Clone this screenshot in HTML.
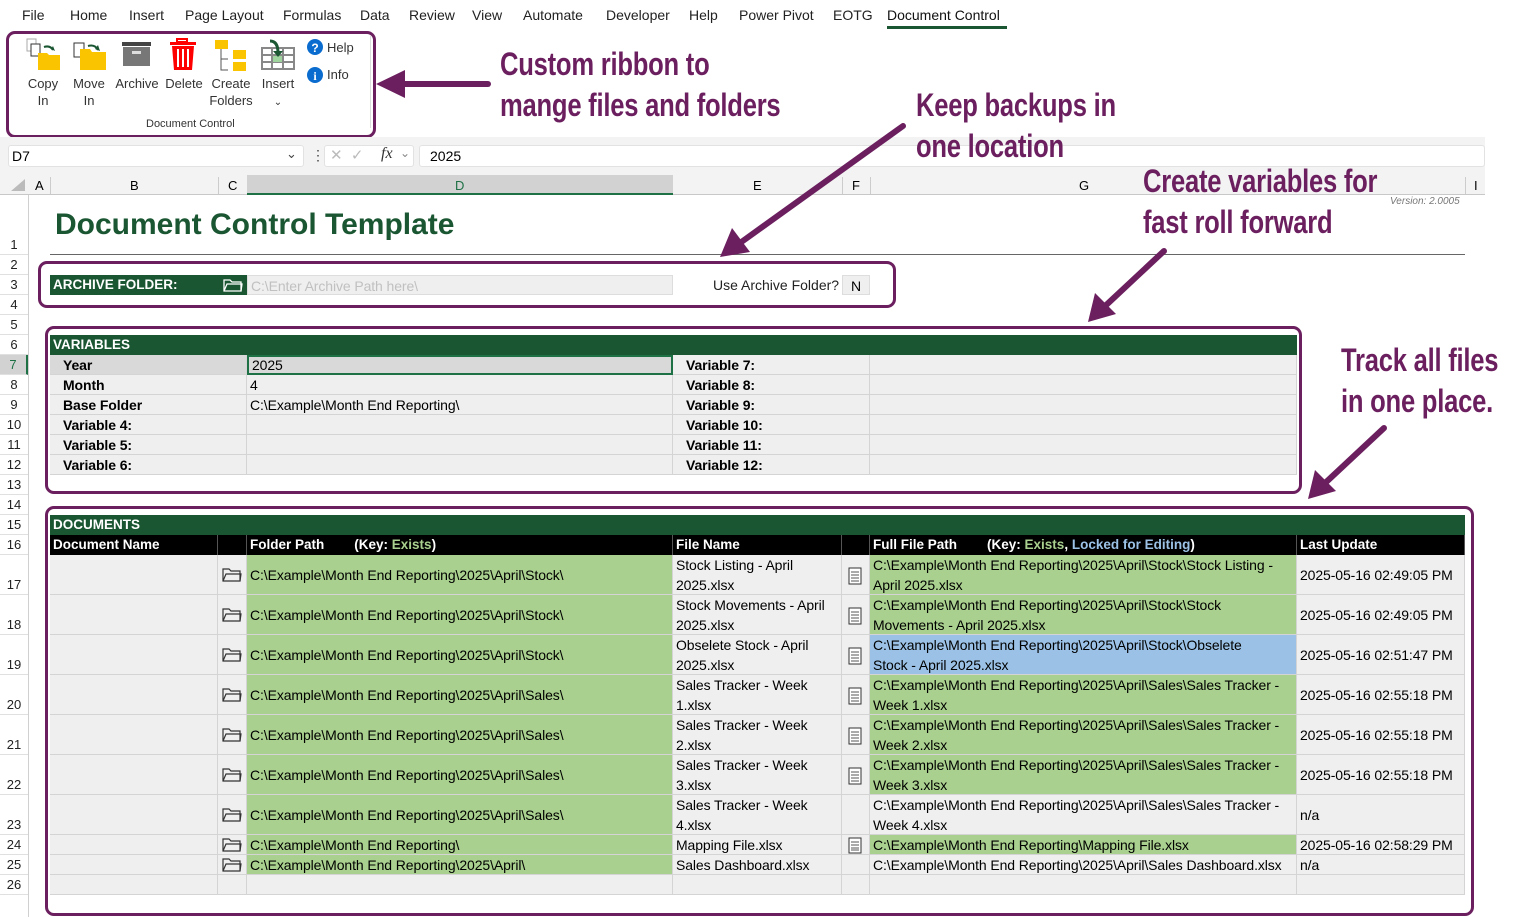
<!DOCTYPE html>
<html><head><meta charset="utf-8">
<style>
*{margin:0;padding:0;box-sizing:border-box}
body{width:1536px;height:917px;overflow:hidden;background:#fff;font-family:"Liberation Sans",Arial,sans-serif;font-size:13px;color:#000;position:relative}
.a{position:absolute}
.t{position:absolute;white-space:nowrap}
.c{position:absolute;background:#efefef;border-right:1px solid #d4d4d4;border-bottom:1px solid #d4d4d4;padding-left:3px;line-height:20px;white-space:nowrap;overflow:hidden;font-size:14px;letter-spacing:-0.1px}
.b{font-weight:bold}
.g{background:#a9d08e}
.bl{background:#9bc2e6}
.hdrg{position:absolute;background:#1a5632;color:#fff;font-weight:bold;line-height:20px;padding-left:3px;font-size:13.5px}
.hdrk{position:absolute;background:#000;color:#fff;font-weight:bold;line-height:20px;padding-left:3px;font-size:13.5px;border-right:1px solid #555}
.rn{position:absolute;left:0;width:28px;text-align:center;font-size:13px;color:#222;border-bottom:1px solid #e0e0e0}
.pbox{position:absolute;border:3px solid #6b1f5f;border-radius:9px}
.ann{position:absolute;color:#6b1f5f;font-weight:bold;font-size:32px;transform:scaleX(.8);transform-origin:left top;white-space:nowrap;letter-spacing:-0.3px}
.tab{position:absolute;top:7px;font-size:14px;color:#222}
.rl{position:absolute;font-size:13px;color:#333;text-align:center;line-height:17px}
.two{line-height:20px;white-space:normal}
.fi{display:block;margin-top:12px}
.fi1{display:block;margin-top:2px}
</style></head><body>

<div class="tab" style="left:22px">File</div>
<div class="tab" style="left:70px">Home</div>
<div class="tab" style="left:129px">Insert</div>
<div class="tab" style="left:185px">Page Layout</div>
<div class="tab" style="left:283px">Formulas</div>
<div class="tab" style="left:360px">Data</div>
<div class="tab" style="left:409px">Review</div>
<div class="tab" style="left:472px">View</div>
<div class="tab" style="left:523px">Automate</div>
<div class="tab" style="left:606px">Developer</div>
<div class="tab" style="left:689px">Help</div>
<div class="tab" style="left:739px">Power Pivot</div>
<div class="tab" style="left:833px">EOTG</div>
<div class="tab" style="left:887px;color:#111">Document Control</div>
<div class="a" style="left:887px;top:26px;width:120px;height:3px;background:#1a5632"></div>

<div class="a" style="left:370px;top:36px;width:1px;height:92px;background:#ddd"></div>
<svg class="a" style="left:20px;top:36px" width="350" height="40" viewBox="20 36 350 40">
 <rect x="27" y="39" width="9" height="12" fill="#fff" stroke="#aaa"/>
 <rect x="31" y="44" width="9" height="12" fill="#fff" stroke="#333"/>
 <path d="M38 55h22v15H38z" fill="#fbc400"/><path d="M38 53h9l2 2H38z" fill="#fbc400"/>
 <path d="M44 47q6-2 9 3" stroke="#1a5632" stroke-width="2" fill="none"/><path d="M51 49l4 2-2-5z" fill="#1a5632"/>
 <rect x="74" y="43" width="10" height="14" fill="#fff" stroke="#333"/>
 <path d="M80 52h26v18H80z" fill="#fbc400"/><path d="M80 49h10l2 3H80z" fill="#fbc400"/>
 <path d="M88 46q7-2 10 4" stroke="#1a5632" stroke-width="2" fill="none"/><path d="M95 49l5 2-2-6z" fill="#1a5632"/>
 <rect x="122" y="42" width="29" height="4" fill="#444"/>
 <rect x="123" y="47" width="27" height="19" fill="#777"/>
 <rect x="132" y="51" width="9" height="3" fill="#ddd"/>
 <rect x="177" y="39" width="10" height="3" fill="none" stroke="#f00" stroke-width="2"/>
 <rect x="170" y="42" width="26" height="3" fill="#f00"/>
 <path d="M172 46h22l-2 24h-18z" fill="#f00"/>
 <path d="M178 49v18M183 49v18M188 49v18" stroke="#fff" stroke-width="2"/>
 <rect x="215" y="40" width="13" height="9" fill="#fbc400"/>
 <path d="M221 49v21h7M221 59h7" stroke="#555" fill="none"/>
 <rect x="233" y="50" width="13" height="9" fill="#fbc400"/>
 <rect x="233" y="62" width="13" height="9" fill="#fbc400"/>
 <rect x="262" y="48" width="32" height="21" fill="#fff" stroke="#888" stroke-width="2"/>
 <path d="M262 55h32M262 62h32M272 48v21M283 48v21" stroke="#888" stroke-width="2"/>
 <rect x="273" y="56" width="9" height="6" fill="#9fd49f"/>
 <path d="M270 41q8 0 8 12" stroke="#1a5632" stroke-width="3" fill="none"/><path d="M273 51l5 6 5-6z" fill="#1a5632"/>
 <circle cx="315" cy="47" r="8" fill="#0a6ccf"/><text x="315" y="52" font-size="12" font-weight="bold" fill="#fff" text-anchor="middle" font-family="Liberation Sans">?</text>
</svg>
<svg class="a" style="left:306px;top:66px" width="18" height="18"><circle cx="9" cy="9" r="8" fill="#0a6ccf"/><text x="9" y="14" font-size="12" font-weight="bold" fill="#fff" text-anchor="middle" font-family="Liberation Serif">i</text></svg>
<div class="t" style="left:327px;top:40px;font-size:13px;color:#333">Help</div>
<div class="t" style="left:327px;top:67px;font-size:13px;color:#333">Info</div>
<div class="rl" style="left:22px;top:75px;width:42px">Copy<br>In</div>
<div class="rl" style="left:68px;top:75px;width:42px">Move<br>In</div>
<div class="rl" style="left:112px;top:75px;width:50px">Archive</div>
<div class="rl" style="left:162px;top:75px;width:44px">Delete</div>
<div class="rl" style="left:206px;top:75px;width:50px">Create<br>Folders</div>
<div class="rl" style="left:256px;top:75px;width:44px">Insert<br><span style="font-size:10px">⌄</span></div>
<div class="t" style="left:146px;top:118px;font-size:11px;color:#333">Document Control</div>
<div class="pbox" style="left:6px;top:31px;width:370px;height:107px"></div>

<div class="a" style="left:0;top:137px;width:1485px;height:38px;background:#f3f3f3"></div>
<div class="a" style="left:8px;top:145px;width:296px;height:22px;background:#fff;border:1px solid #e2e2e2;border-radius:3px"></div>
<div class="t" style="left:12px;top:148px;font-size:14px">D7</div>
<div class="t" style="left:286px;top:146px;font-size:13px;color:#444">⌄</div>
<div class="t" style="left:311px;top:147px;font-size:14px;color:#444">⋮</div>
<div class="a" style="left:324px;top:145px;width:90px;height:22px;background:#fff;border:1px solid #e2e2e2;border-radius:3px"></div>
<div class="t" style="left:330px;top:146px;font-size:15px;color:#bbb">✕ &nbsp;✓</div>
<div class="t" style="left:381px;top:145px;font-size:16px;font-style:italic;font-family:'Liberation Serif',serif;color:#333">fx</div>
<div class="t" style="left:400px;top:146px;font-size:12px;color:#888">⌄</div>
<div class="a" style="left:419px;top:145px;width:1066px;height:22px;background:#fff;border:1px solid #e2e2e2;border-radius:3px"></div>
<div class="t" style="left:430px;top:148px;font-size:14px">2025</div>

<div class="a" style="left:0;top:175px;width:1485px;height:20px;background:#f3f3f3;border-bottom:1px solid #c8c8c8"></div>
<svg class="a" style="left:10px;top:178px" width="16" height="14"><path d="M15 1V13H1z" fill="#bbb"/></svg>
<div class="a" style="left:247px;top:175px;width:426px;height:20px;background:#d2d2d2;border-bottom:2px solid #1e7145"></div>
<div class="t" style="left:35px;top:178px">A</div>
<div class="t" style="left:130px;top:178px">B</div>
<div class="t" style="left:228px;top:178px">C</div>
<div class="t" style="left:455px;top:178px;color:#1e7145">D</div>
<div class="t" style="left:753px;top:178px">E</div>
<div class="t" style="left:852px;top:178px">F</div>
<div class="t" style="left:1079px;top:178px">G</div>
<div class="t" style="left:1474px;top:178px">I</div>
<div class="a" style="left:50px;top:177px;width:1px;height:17px;background:#ccc"></div>
<div class="a" style="left:218px;top:177px;width:1px;height:17px;background:#ccc"></div>
<div class="a" style="left:842px;top:177px;width:1px;height:17px;background:#ccc"></div>
<div class="a" style="left:870px;top:177px;width:1px;height:17px;background:#ccc"></div>
<div class="a" style="left:1465px;top:177px;width:1px;height:17px;background:#ccc"></div>

<div class="a" style="left:28px;top:195px;width:1px;height:722px;background:#d0d0d0"></div>
<div class="rn" style="top:195px;height:60px;padding-top:42px">1</div>
<div class="rn" style="top:255px;height:20px;line-height:20px">2</div>
<div class="rn" style="top:275px;height:20px;line-height:20px">3</div>
<div class="rn" style="top:295px;height:20px;line-height:20px">4</div>
<div class="rn" style="top:315px;height:20px;line-height:20px">5</div>
<div class="rn" style="top:335px;height:20px;line-height:20px">6</div>
<div class="rn" style="top:355px;height:20px;line-height:20px;background:#d2d2d2;color:#1e7145;border-right:2px solid #1e7145">7</div>
<div class="rn" style="top:375px;height:20px;line-height:20px">8</div>
<div class="rn" style="top:395px;height:20px;line-height:20px">9</div>
<div class="rn" style="top:415px;height:20px;line-height:20px">10</div>
<div class="rn" style="top:435px;height:20px;line-height:20px">11</div>
<div class="rn" style="top:455px;height:20px;line-height:20px">12</div>
<div class="rn" style="top:475px;height:20px;line-height:20px">13</div>
<div class="rn" style="top:495px;height:20px;line-height:20px">14</div>
<div class="rn" style="top:515px;height:20px;line-height:20px">15</div>
<div class="rn" style="top:535px;height:20px;line-height:20px">16</div>
<div class="rn" style="top:555px;height:40px;line-height:20px;padding-top:20px">17</div>
<div class="rn" style="top:595px;height:40px;line-height:20px;padding-top:20px">18</div>
<div class="rn" style="top:635px;height:40px;line-height:20px;padding-top:20px">19</div>
<div class="rn" style="top:675px;height:40px;line-height:20px;padding-top:20px">20</div>
<div class="rn" style="top:715px;height:40px;line-height:20px;padding-top:20px">21</div>
<div class="rn" style="top:755px;height:40px;line-height:20px;padding-top:20px">22</div>
<div class="rn" style="top:795px;height:40px;line-height:20px;padding-top:20px">23</div>
<div class="rn" style="top:835px;height:20px;line-height:20px">24</div>
<div class="rn" style="top:855px;height:20px;line-height:20px">25</div>
<div class="rn" style="top:875px;height:20px;line-height:20px">26</div>

<div class="t" style="left:55px;top:208px;font-size:30px;font-weight:bold;color:#1a5632">Document Control Template</div>
<div class="t" style="left:1390px;top:196px;font-size:10px;font-style:italic;color:#777">Version: 2.0005</div>
<div class="a" style="left:50px;top:254px;width:1415px;height:1px;background:#666"></div>

<div class="hdrg" style="left:50px;top:275px;width:197px;height:20px">ARCHIVE FOLDER:</div>
<svg class="a" style="left:223px;top:278px" width="20" height="14"><path d="M1 2h6l2 2h9v9H1z" fill="none" stroke="#fff" stroke-width="1.3"/><path d="M1 13l3-7h15l-1 7" fill="none" stroke="#fff" stroke-width="1.3"/></svg>
<div class="c" style="left:247px;top:275px;width:426px;height:20px;color:#c0c0c0;border:1px solid #ddd">C:\Enter Archive Path here\</div>
<div class="t" style="left:713px;top:277px;font-size:14px;color:#222">Use Archive Folder?</div>
<div class="c" style="left:842px;top:275px;width:28px;height:20px;padding:0;text-align:center;border:1px solid #ddd">N</div>
<div class="pbox" style="left:38px;top:261px;width:858px;height:47px"></div>

<div class="hdrg" style="left:50px;top:335px;width:1247px;height:20px">VARIABLES</div>
<div class="c b" style="left:50px;top:355px;width:197px;height:20px;padding-left:13px;background:#d9d9d9">Year</div>
<div class="c" style="left:247px;top:355px;width:426px;height:20px;background:#d9d9d9;border:2px solid #1e7145;line-height:16px">2025</div>
<div class="c b" style="left:50px;top:375px;width:197px;height:20px;padding-left:13px">Month</div>
<div class="c" style="left:247px;top:375px;width:426px;height:20px">4</div>
<div class="c b" style="left:50px;top:395px;width:197px;height:20px;padding-left:13px">Base Folder</div>
<div class="c" style="left:247px;top:395px;width:426px;height:20px">C:\Example\Month End Reporting\</div>
<div class="c b" style="left:50px;top:415px;width:197px;height:20px;padding-left:13px">Variable 4:</div>
<div class="c" style="left:247px;top:415px;width:426px;height:20px"></div>
<div class="c b" style="left:50px;top:435px;width:197px;height:20px;padding-left:13px">Variable 5:</div>
<div class="c" style="left:247px;top:435px;width:426px;height:20px"></div>
<div class="c b" style="left:50px;top:455px;width:197px;height:20px;padding-left:13px">Variable 6:</div>
<div class="c" style="left:247px;top:455px;width:426px;height:20px"></div>
<div class="c b" style="left:673px;top:355px;width:197px;height:20px;padding-left:13px">Variable 7:</div>
<div class="c" style="left:870px;top:355px;width:427px;height:20px"></div>
<div class="c b" style="left:673px;top:375px;width:197px;height:20px;padding-left:13px">Variable 8:</div>
<div class="c" style="left:870px;top:375px;width:427px;height:20px"></div>
<div class="c b" style="left:673px;top:395px;width:197px;height:20px;padding-left:13px">Variable 9:</div>
<div class="c" style="left:870px;top:395px;width:427px;height:20px"></div>
<div class="c b" style="left:673px;top:415px;width:197px;height:20px;padding-left:13px">Variable 10:</div>
<div class="c" style="left:870px;top:415px;width:427px;height:20px"></div>
<div class="c b" style="left:673px;top:435px;width:197px;height:20px;padding-left:13px">Variable 11:</div>
<div class="c" style="left:870px;top:435px;width:427px;height:20px"></div>
<div class="c b" style="left:673px;top:455px;width:197px;height:20px;padding-left:13px">Variable 12:</div>
<div class="c" style="left:870px;top:455px;width:427px;height:20px"></div>
<div class="pbox" style="left:45px;top:326px;width:1257px;height:168px"></div>

<div class="hdrg" style="left:50px;top:515px;width:1415px;height:20px">DOCUMENTS</div>
<div class="hdrk" style="left:50px;top:535px;width:168px;height:20px">Document Name</div>
<div class="hdrk" style="left:218px;top:535px;width:29px;height:20px"></div>
<div class="hdrk" style="left:247px;top:535px;width:426px;height:20px">Folder Path<span style="margin-left:30px">(Key: <span style="color:#a9d08e">Exists</span>)</span></div>
<div class="hdrk" style="left:673px;top:535px;width:169px;height:20px">File Name</div>
<div class="hdrk" style="left:842px;top:535px;width:28px;height:20px"></div>
<div class="hdrk" style="left:870px;top:535px;width:427px;height:20px">Full File Path<span style="margin-left:30px">(Key: <span style="color:#a9d08e">Exists</span>, <span style="color:#9bc2e6">Locked for Editing</span>)</span></div>
<div class="hdrk" style="left:1297px;top:535px;width:168px;height:20px">Last Update</div>

<!-- icon svgs reused inline -->
<!-- row 17 -->
<div class="c" style="left:50px;top:555px;width:168px;height:40px"></div>
<div class="c" style="left:218px;top:555px;width:29px;height:40px;padding-left:4px"><svg class="fi" width="20" height="15"><path d="M1 2h6l2 2h9v10H1z" fill="none" stroke="#333" stroke-width="1.2"/><path d="M1 14l3-7h15l-1 7" fill="none" stroke="#333" stroke-width="1.2"/></svg></div>
<div class="c g" style="left:247px;top:555px;width:426px;height:40px;line-height:40px">C:\Example\Month End Reporting\2025\April\Stock\</div>
<div class="c two" style="left:673px;top:555px;width:169px;height:40px">Stock Listing - April 2025.xlsx</div>
<div class="c" style="left:842px;top:555px;width:28px;height:40px;padding-left:6px"><svg class="fi" width="14" height="18"><path d="M1 1h12v16H1z" fill="#fff" stroke="#333"/><path d="M3 5h8M3 8h8M3 11h8M3 14h8" stroke="#555"/></svg></div>
<div class="c g two" style="left:870px;top:555px;width:427px;height:40px">C:\Example\Month End Reporting\2025\April\Stock\Stock Listing - April 2025.xlsx</div>
<div class="c" style="left:1297px;top:555px;width:168px;height:40px;line-height:40px">2025-05-16 02:49:05 PM</div>
<!-- row 18 -->
<div class="c" style="left:50px;top:595px;width:168px;height:40px"></div>
<div class="c" style="left:218px;top:595px;width:29px;height:40px;padding-left:4px"><svg class="fi" width="20" height="15"><path d="M1 2h6l2 2h9v10H1z" fill="none" stroke="#333" stroke-width="1.2"/><path d="M1 14l3-7h15l-1 7" fill="none" stroke="#333" stroke-width="1.2"/></svg></div>
<div class="c g" style="left:247px;top:595px;width:426px;height:40px;line-height:40px">C:\Example\Month End Reporting\2025\April\Stock\</div>
<div class="c two" style="left:673px;top:595px;width:169px;height:40px">Stock Movements - April 2025.xlsx</div>
<div class="c" style="left:842px;top:595px;width:28px;height:40px;padding-left:6px"><svg class="fi" width="14" height="18"><path d="M1 1h12v16H1z" fill="#fff" stroke="#333"/><path d="M3 5h8M3 8h8M3 11h8M3 14h8" stroke="#555"/></svg></div>
<div class="c g two" style="left:870px;top:595px;width:427px;height:40px">C:\Example\Month End Reporting\2025\April\Stock\Stock<br>Movements - April 2025.xlsx</div>
<div class="c" style="left:1297px;top:595px;width:168px;height:40px;line-height:40px">2025-05-16 02:49:05 PM</div>
<!-- row 19 -->
<div class="c" style="left:50px;top:635px;width:168px;height:40px"></div>
<div class="c" style="left:218px;top:635px;width:29px;height:40px;padding-left:4px"><svg class="fi" width="20" height="15"><path d="M1 2h6l2 2h9v10H1z" fill="none" stroke="#333" stroke-width="1.2"/><path d="M1 14l3-7h15l-1 7" fill="none" stroke="#333" stroke-width="1.2"/></svg></div>
<div class="c g" style="left:247px;top:635px;width:426px;height:40px;line-height:40px">C:\Example\Month End Reporting\2025\April\Stock\</div>
<div class="c two" style="left:673px;top:635px;width:169px;height:40px">Obselete Stock - April 2025.xlsx</div>
<div class="c" style="left:842px;top:635px;width:28px;height:40px;padding-left:6px"><svg class="fi" width="14" height="18"><path d="M1 1h12v16H1z" fill="#fff" stroke="#333"/><path d="M3 5h8M3 8h8M3 11h8M3 14h8" stroke="#555"/></svg></div>
<div class="c bl two" style="left:870px;top:635px;width:427px;height:40px">C:\Example\Month End Reporting\2025\April\Stock\Obselete<br>Stock - April 2025.xlsx</div>
<div class="c" style="left:1297px;top:635px;width:168px;height:40px;line-height:40px">2025-05-16 02:51:47 PM</div>
<!-- row 20 -->
<div class="c" style="left:50px;top:675px;width:168px;height:40px"></div>
<div class="c" style="left:218px;top:675px;width:29px;height:40px;padding-left:4px"><svg class="fi" width="20" height="15"><path d="M1 2h6l2 2h9v10H1z" fill="none" stroke="#333" stroke-width="1.2"/><path d="M1 14l3-7h15l-1 7" fill="none" stroke="#333" stroke-width="1.2"/></svg></div>
<div class="c g" style="left:247px;top:675px;width:426px;height:40px;line-height:40px">C:\Example\Month End Reporting\2025\April\Sales\</div>
<div class="c two" style="left:673px;top:675px;width:169px;height:40px">Sales Tracker - Week<br>1.xlsx</div>
<div class="c" style="left:842px;top:675px;width:28px;height:40px;padding-left:6px"><svg class="fi" width="14" height="18"><path d="M1 1h12v16H1z" fill="#fff" stroke="#333"/><path d="M3 5h8M3 8h8M3 11h8M3 14h8" stroke="#555"/></svg></div>
<div class="c g two" style="left:870px;top:675px;width:427px;height:40px">C:\Example\Month End Reporting\2025\April\Sales\Sales Tracker -<br>Week 1.xlsx</div>
<div class="c" style="left:1297px;top:675px;width:168px;height:40px;line-height:40px">2025-05-16 02:55:18 PM</div>
<!-- row 21 -->
<div class="c" style="left:50px;top:715px;width:168px;height:40px"></div>
<div class="c" style="left:218px;top:715px;width:29px;height:40px;padding-left:4px"><svg class="fi" width="20" height="15"><path d="M1 2h6l2 2h9v10H1z" fill="none" stroke="#333" stroke-width="1.2"/><path d="M1 14l3-7h15l-1 7" fill="none" stroke="#333" stroke-width="1.2"/></svg></div>
<div class="c g" style="left:247px;top:715px;width:426px;height:40px;line-height:40px">C:\Example\Month End Reporting\2025\April\Sales\</div>
<div class="c two" style="left:673px;top:715px;width:169px;height:40px">Sales Tracker - Week<br>2.xlsx</div>
<div class="c" style="left:842px;top:715px;width:28px;height:40px;padding-left:6px"><svg class="fi" width="14" height="18"><path d="M1 1h12v16H1z" fill="#fff" stroke="#333"/><path d="M3 5h8M3 8h8M3 11h8M3 14h8" stroke="#555"/></svg></div>
<div class="c g two" style="left:870px;top:715px;width:427px;height:40px">C:\Example\Month End Reporting\2025\April\Sales\Sales Tracker -<br>Week 2.xlsx</div>
<div class="c" style="left:1297px;top:715px;width:168px;height:40px;line-height:40px">2025-05-16 02:55:18 PM</div>
<!-- row 22 -->
<div class="c" style="left:50px;top:755px;width:168px;height:40px"></div>
<div class="c" style="left:218px;top:755px;width:29px;height:40px;padding-left:4px"><svg class="fi" width="20" height="15"><path d="M1 2h6l2 2h9v10H1z" fill="none" stroke="#333" stroke-width="1.2"/><path d="M1 14l3-7h15l-1 7" fill="none" stroke="#333" stroke-width="1.2"/></svg></div>
<div class="c g" style="left:247px;top:755px;width:426px;height:40px;line-height:40px">C:\Example\Month End Reporting\2025\April\Sales\</div>
<div class="c two" style="left:673px;top:755px;width:169px;height:40px">Sales Tracker - Week<br>3.xlsx</div>
<div class="c" style="left:842px;top:755px;width:28px;height:40px;padding-left:6px"><svg class="fi" width="14" height="18"><path d="M1 1h12v16H1z" fill="#fff" stroke="#333"/><path d="M3 5h8M3 8h8M3 11h8M3 14h8" stroke="#555"/></svg></div>
<div class="c g two" style="left:870px;top:755px;width:427px;height:40px">C:\Example\Month End Reporting\2025\April\Sales\Sales Tracker -<br>Week 3.xlsx</div>
<div class="c" style="left:1297px;top:755px;width:168px;height:40px;line-height:40px">2025-05-16 02:55:18 PM</div>
<!-- row 23 -->
<div class="c" style="left:50px;top:795px;width:168px;height:40px"></div>
<div class="c" style="left:218px;top:795px;width:29px;height:40px;padding-left:4px"><svg class="fi" width="20" height="15"><path d="M1 2h6l2 2h9v10H1z" fill="none" stroke="#333" stroke-width="1.2"/><path d="M1 14l3-7h15l-1 7" fill="none" stroke="#333" stroke-width="1.2"/></svg></div>
<div class="c g" style="left:247px;top:795px;width:426px;height:40px;line-height:40px">C:\Example\Month End Reporting\2025\April\Sales\</div>
<div class="c two" style="left:673px;top:795px;width:169px;height:40px">Sales Tracker - Week<br>4.xlsx</div>
<div class="c" style="left:842px;top:795px;width:28px;height:40px"></div>
<div class="c two" style="left:870px;top:795px;width:427px;height:40px">C:\Example\Month End Reporting\2025\April\Sales\Sales Tracker -<br>Week 4.xlsx</div>
<div class="c" style="left:1297px;top:795px;width:168px;height:40px;line-height:40px">n/a</div>
<!-- row 24 -->
<div class="c" style="left:50px;top:835px;width:168px;height:20px"></div>
<div class="c" style="left:218px;top:835px;width:29px;height:20px;padding-left:4px"><svg class="fi1" width="20" height="15"><path d="M1 2h6l2 2h9v10H1z" fill="none" stroke="#333" stroke-width="1.2"/><path d="M1 14l3-7h15l-1 7" fill="none" stroke="#333" stroke-width="1.2"/></svg></div>
<div class="c g" style="left:247px;top:835px;width:426px;height:20px">C:\Example\Month End Reporting\</div>
<div class="c" style="left:673px;top:835px;width:169px;height:20px">Mapping File.xlsx</div>
<div class="c" style="left:842px;top:835px;width:28px;height:20px;padding-left:6px"><svg class="fi1" width="14" height="17"><path d="M1 1h12v15H1z" fill="#fff" stroke="#333"/><path d="M3 5h8M3 8h8M3 11h8M3 13h8" stroke="#555"/></svg></div>
<div class="c g" style="left:870px;top:835px;width:427px;height:20px">C:\Example\Month End Reporting\Mapping File.xlsx</div>
<div class="c" style="left:1297px;top:835px;width:168px;height:20px">2025-05-16 02:58:29 PM</div>
<!-- row 25 -->
<div class="c" style="left:50px;top:855px;width:168px;height:20px"></div>
<div class="c" style="left:218px;top:855px;width:29px;height:20px;padding-left:4px"><svg class="fi1" width="20" height="15"><path d="M1 2h6l2 2h9v10H1z" fill="none" stroke="#333" stroke-width="1.2"/><path d="M1 14l3-7h15l-1 7" fill="none" stroke="#333" stroke-width="1.2"/></svg></div>
<div class="c g" style="left:247px;top:855px;width:426px;height:20px">C:\Example\Month End Reporting\2025\April\</div>
<div class="c" style="left:673px;top:855px;width:169px;height:20px">Sales Dashboard.xlsx</div>
<div class="c" style="left:842px;top:855px;width:28px;height:20px"></div>
<div class="c" style="left:870px;top:855px;width:427px;height:20px">C:\Example\Month End Reporting\2025\April\Sales Dashboard.xlsx</div>
<div class="c" style="left:1297px;top:855px;width:168px;height:20px">n/a</div>
<!-- row 26 -->
<div class="c" style="left:50px;top:875px;width:168px;height:20px"></div>
<div class="c" style="left:218px;top:875px;width:29px;height:20px"></div>
<div class="c" style="left:247px;top:875px;width:426px;height:20px"></div>
<div class="c" style="left:673px;top:875px;width:169px;height:20px"></div>
<div class="c" style="left:842px;top:875px;width:28px;height:20px"></div>
<div class="c" style="left:870px;top:875px;width:427px;height:20px"></div>
<div class="c" style="left:1297px;top:875px;width:168px;height:20px"></div>
<div class="pbox" style="left:45px;top:506px;width:1429px;height:410px"></div>

<div class="ann" style="left:500px;top:46px">Custom ribbon to</div>
<div class="ann" style="left:500px;top:87px">mange files and folders</div>
<div class="ann" style="left:916px;top:87px">Keep backups in</div>
<div class="ann" style="left:916px;top:128px">one location</div>
<div class="ann" style="left:1143px;top:163px">Create variables for</div>
<div class="ann" style="left:1143px;top:204px">fast roll forward</div>
<div class="ann" style="left:1341px;top:342px">Track all files</div>
<div class="ann" style="left:1341px;top:383px">in one place.</div>

<svg class="a" style="left:0;top:0" width="1536" height="917">
 <g stroke="#6b1f5f" stroke-width="6" stroke-linecap="round" fill="#6b1f5f">
  <line x1="488" y1="84" x2="400" y2="84"/>
  <line x1="903" y1="126" x2="740" y2="243"/>
  <line x1="1164" y1="251" x2="1103" y2="308"/>
  <line x1="1384" y1="428" x2="1323" y2="485"/>
 </g>
 <g fill="#6b1f5f">
  <path d="M376 84L405 70L405 98z"/>
  <path d="M720 257L732 228L750 252z"/>
  <path d="M1088 322L1095 293L1116 314z"/>
  <path d="M1308 499L1315 470L1336 491z"/>
 </g>
</svg>
</body></html>
